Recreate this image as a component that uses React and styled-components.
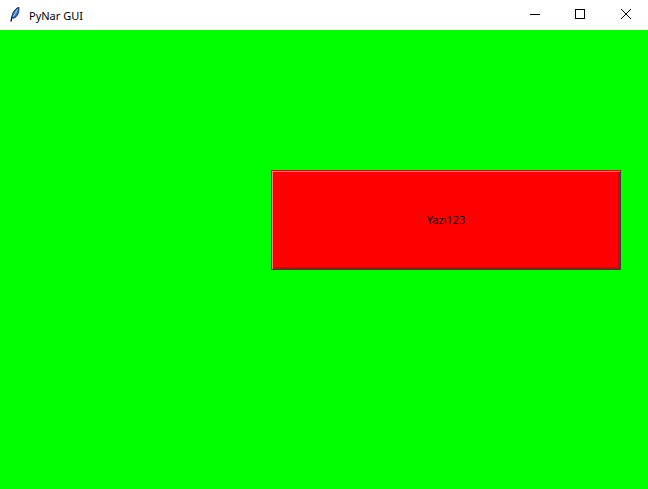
import styled, { createGlobalStyle } from "styled-components";

const GlobalStyle = createGlobalStyle`
    html, body {
        margin: 0;
        padding: 0;
        background: #00ff00;
    }
`

const App = () => {
    return (
        <Window>
            <GlobalStyle />
            <TitleBar>
                <TitleLeft>
                    <FeatherIcon />
                    <TitleText>PyNar GUI</TitleText>
                </TitleLeft>
                <WindowButtons>
                    <WindowButton $width={44} aria-label="minimize">
                        <svg width="10" height="10" viewBox="0 0 10 10">
                            <path d="M0 5.5H10" stroke="#000" strokeWidth="1" />
                        </svg>
                    </WindowButton>
                    <WindowButton aria-label="maximize">
                        <svg width="10" height="10" viewBox="0 0 10 10">
                            <rect x="0.5" y="0.5" width="9" height="9" fill="none" stroke="#000" strokeWidth="1" />
                        </svg>
                    </WindowButton>
                    <WindowButton aria-label="close">
                        <svg width="10" height="10" viewBox="0 0 10 10">
                            <path d="M0 0L10 10M10 0L0 10" stroke="#000" strokeWidth="1" />
                        </svg>
                    </WindowButton>
                </WindowButtons>
            </TitleBar>
            <Content>
                <RedButton>Yazı123</RedButton>
            </Content>
        </Window>
    )
}

const FeatherIcon = () => (
    <svg width="16" height="16" viewBox="0 0 16 16">
        <path d="M3 14.5C3.2 12.5 3.6 11.2 4.4 9.5" stroke="#000" strokeWidth="1.3" fill="none" />
        <path d="M4 10.5C3.6 7 6.8 1.5 10.8 0.2C11.4 4.5 9.6 10 5.6 11.2Z" fill="#2f7fe8" stroke="#0c1222" strokeWidth="0.9" />
        <path d="M5.4 9.5L9.6 2.4" stroke="#bcd8fa" strokeWidth="0.8" fill="none" />
    </svg>
)

export default App;

const Window = styled.div`
    width: 648px;
    height: 489px;
    display: flex;
    flex-direction: column;
    overflow: hidden;
    background-color: #00ff00;
`

const TitleBar = styled.div`
    height: 30px;
    flex-shrink: 0;
    background-color: #ffffff;
    display: flex;
    justify-content: space-between;
`

const TitleLeft = styled.div`
    display: flex;
    align-items: center;
    padding-left: 8px;
    gap: 5px;
`

const TitleText = styled.span`
    font-family: "Noto Sans", "Liberation Sans", sans-serif;
    font-size: 11px;
    color: #000000;
`

const WindowButtons = styled.div`
    display: flex;
    margin-right: -1px;
`

const WindowButton = styled.div`
    width: ${props => props.$width || 46}px;
    height: 28px;
    display: flex;
    align-items: center;
    justify-content: center;
`

const Content = styled.div`
    flex: 1;
    padding: 140px 27px 0 271px;
`

const RedButton = styled.div`
    width: 350px;
    height: 100px;
    box-sizing: border-box;
    padding-bottom: 2px;
    background-color: #ff0000;
    border: 1px solid;
    border-color: #e30000 #404040 #404040 #e30000;
    box-shadow: inset 1px 1px 0 #ff8080, inset -1px -1px 0 #6a3030, inset -2px -2px 0 #c01010;
    display: flex;
    align-items: center;
    justify-content: center;
    font-family: "Noto Sans", "Liberation Sans", sans-serif;
    font-size: 11px;
    color: #000000;
`
